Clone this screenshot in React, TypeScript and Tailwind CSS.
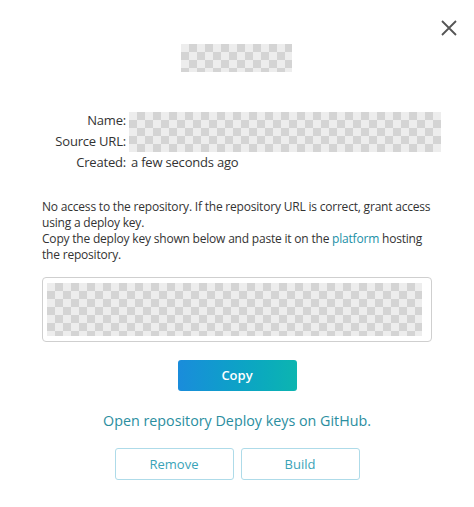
import React from 'react';

const checker =
  'bg-[repeating-conic-gradient(#d4d4d4_0%_25%,#ededed_0%_50%)] bg-[length:16px_16px]';

const Redacted: React.FC<{ className?: string }> = ({ className = '' }) => (
  <div className={`${checker} ${className}`} />
);

export default function App() {
  return (
    <div className="w-[474px] h-[507px] bg-white relative font-['Open_Sans',sans-serif] text-[#333]">
      <button className="absolute right-[16px] top-[19px] text-[#555]" title="Close">
        <svg width="18" height="18" viewBox="0 0 18 18" fill="none" stroke="currentColor" strokeWidth="1.8">
          <path d="M2 2 L16 16 M16 2 L2 16" />
        </svg>
      </button>

      <div className="pt-[44px] px-[42px] flex flex-col">
        <Redacted className="w-[111px] h-[28px] self-center -translate-x-[1px]" />

        <div className="mt-[38px] text-[13px] leading-[21px] grid grid-cols-[84px_1fr] gap-x-[3px]">
          <div className="text-right tracking-[-0.2px]">Name:</div>
          <Redacted className="row-span-2 mt-[2px] mb-[0px] mr-[-9px]" />
          <div className="text-right tracking-[-0.2px]">Source URL:</div>
          <div className="text-right tracking-[-0.2px]">Created:</div>
          <div className="pl-[2px] tracking-[-0.2px]">a few seconds ago</div>
        </div>

        <p className="mt-[26px] text-[12px] leading-[16px] tracking-[-0.2px]">
          No access to the repository. If the repository URL is correct, grant access using a deploy key.
          <br />
          Copy the deploy key shown below and paste it on the{' '}
          <a className="text-[#1a8fa6]">platform</a> hosting the repository.
        </p>

        <div className="mt-[14px] h-[65px] w-[390px] border border-[#cfcfcf] rounded-[4px] pl-[4px] pr-[9px] pt-[5px] pb-[5px]">
          <Redacted className="h-full" />
        </div>

        <button className="mt-[18px] self-center w-[119px] h-[31px] rounded-[3px] bg-gradient-to-r from-[#1a8cdb] to-[#0db5b0] text-white text-[13px] font-semibold">
          Copy
        </button>

        <a className="mt-[19px] self-center text-[14.3px] text-[#2a8ea0]">
          Open repository Deploy keys on GitHub.
        </a>

        <div className="mt-[17px] self-center flex gap-[7px]">
          <button className="w-[119px] h-[32px] border border-[#aedbe9] rounded-[3px] text-[13px] text-[#3aa3b8]">
            Remove
          </button>
          <button className="w-[119px] h-[32px] border border-[#aedbe9] rounded-[3px] text-[13px] text-[#3aa3b8]">
            Build
          </button>
        </div>
      </div>
    </div>
  );
}
